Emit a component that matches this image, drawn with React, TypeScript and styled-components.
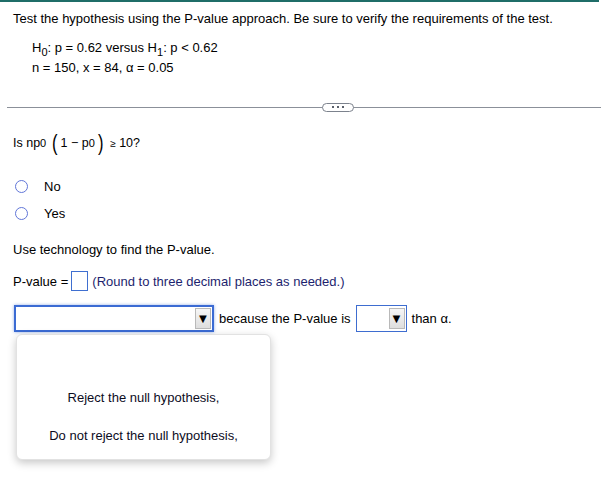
import React from "react";
import styled, { createGlobalStyle } from "styled-components";

const GlobalStyle = createGlobalStyle`
  html, body {
    margin: 0;
    padding: 0;
    background: #ffffff;
  }
  body {
    font-family: "Liberation Sans", Arial, sans-serif;
    color: #000000;
  }
`;

export default function App() {
  return (
    <Page>
      <GlobalStyle />
      <TopBar />
      <Prompt>Test the hypothesis using the P-value approach. Be sure to verify the requirements of the test.</Prompt>

      <MathBlock>
        <MathLine>
          H<Sub>0</Sub>: p = 0.62 versus H<Sub>1</Sub>: p &lt; 0.62
        </MathLine>
        <MathLine>n = 150, x = 84, α = 0.05</MathLine>
      </MathBlock>

      <Divider>
        <MoreButton type="button">
          <Dot />
          <Dot />
          <Dot />
        </MoreButton>
      </Divider>

      <Question>
        Is np<Sub>0</Sub>
        <BigParen $left>(</BigParen>1 − p<Sub>0</Sub>
        <BigParen>)</BigParen>
        <Geq>≥</Geq> 10?
      </Question>

      <RadioList>
        <RadioRow>
          <RadioCircle />
          <RadioLabel>No</RadioLabel>
        </RadioRow>
        <RadioRow>
          <RadioCircle />
          <RadioLabel>Yes</RadioLabel>
        </RadioRow>
      </RadioList>

      <Instruction>Use technology to find the P-value.</Instruction>

      <AnswerRow>
        P-value =<AnswerBox />
        <Hint>(Round to three decimal places as needed.)</Hint>
      </AnswerRow>

      <SelectRow>
        <SelectWrap>
          <FakeSelect $width={200} $focused>
            <ArrowButton>▼</ArrowButton>
          </FakeSelect>
          <Menu>
            <MenuItem />
            <MenuItem>Reject the null hypothesis,</MenuItem>
            <MenuItem>Do not reject the null hypothesis,</MenuItem>
          </Menu>
        </SelectWrap>
        <RowText>because the P-value is</RowText>
        <FakeSelect $width={51}>
          <ArrowButton>▼</ArrowButton>
        </FakeSelect>
        <RowText>than α.</RowText>
      </SelectRow>
    </Page>
  );
}

const Page = styled.div`
  width: 601px;
  height: 497px;
  overflow: hidden;
`;

const TopBar = styled.div`
  height: 2px;
  width: 599px;
  background-color: #1f6d68;
`;

const Prompt = styled.p`
  margin: 9px 0 0 13px;
  font-size: 13px;
  line-height: 16px;
`;

const MathBlock = styled.div`
  margin: 11px 0 0 32px;
`;

const MathLine = styled.div`
  font-size: 13px;
  line-height: 20px;
`;

const Sub = styled.sub`
  font-size: 11px;
  vertical-align: -4px;
  line-height: 0;
`;

const Divider = styled.div`
  margin: 24px 0 0 7px;
  height: 10px;
  display: flex;
  align-items: center;
  justify-content: center;
  position: relative;

  &::before {
    content: "";
    position: absolute;
    left: 0;
    right: 0;
    top: 5px;
    height: 1px;
    background-color: #8b9099;
  }
`;

const MoreButton = styled.button`
  position: relative;
  z-index: 1;
  width: 32px;
  height: 9px;
  margin-left: 68px;
  padding: 0;
  border: 1px solid #7c828d;
  border-radius: 5px;
  background-color: #ffffff;
  display: flex;
  align-items: center;
  justify-content: center;
  gap: 3px;
`;

const Dot = styled.span`
  width: 2px;
  height: 2px;
  background-color: #5a606b;
`;

const Question = styled.div`
  margin: 19px 0 0 13px;
  height: 24px;
  font-size: 12.5px;
  display: flex;
  align-items: center;
  white-space: pre;
`;

const BigParen = styled.span<{ $left?: boolean }>`
  font-size: 22px;
  line-height: 1;
  margin: ${(p) => (p.$left ? "0 2px 0 5px" : "0 2px")};
  transform: scaleX(0.75);
`;

const Geq = styled.span`
  font-size: 10px;
  margin-left: 4px;
`;

const RadioList = styled.div`
  margin: 18px 0 0 15px;
  display: flex;
  flex-direction: column;
`;

const RadioRow = styled.label`
  height: 27px;
  display: flex;
  align-items: center;
`;

const RadioCircle = styled.span`
  width: 11px;
  height: 11px;
  border: 1.2px solid #6176d8;
  border-radius: 50%;
  box-sizing: content-box;
`;

const RadioLabel = styled.span`
  margin-left: 16px;
  font-size: 13px;
`;

const Instruction = styled.p`
  margin: 15px 0 0 13px;
  font-size: 13px;
  line-height: 16px;
`;

const AnswerRow = styled.div`
  margin: 13px 0 0 13px;
  height: 20px;
  font-size: 13px;
  display: flex;
  align-items: center;
`;

const AnswerBox = styled.span`
  width: 15px;
  height: 18px;
  margin-left: 3px;
  border: 1px solid #3f6fd0;
`;

const Hint = styled.span`
  margin-left: 4px;
  color: #1d1f6e;
`;

const SelectRow = styled.div`
  margin: 14px 0 0 14px;
  display: flex;
  align-items: center;
  gap: 5px;
  font-size: 13px;
`;

const SelectWrap = styled.div`
  position: relative;
`;

const FakeSelect = styled.div<{ $width: number; $focused?: boolean }>`
  width: ${(p) => p.$width}px;
  height: 27px;
  box-sizing: border-box;
  border: ${(p) => (p.$focused ? "2px solid #3b6bd3" : "1px solid #3e6dd0")};
  box-shadow: ${(p) => (p.$focused ? "0 0 3px rgba(59, 107, 211, 0.55)" : "none")};
  background-color: #ffffff;
  display: flex;
  align-items: center;
  justify-content: flex-end;
  padding-right: 1px;
`;

const ArrowButton = styled.span`
  width: 14px;
  height: 19px;
  border: 1px solid #b9b9b9;
  background: linear-gradient(#f6f6f6, #dedede);
  font-size: 13px;
  line-height: 19px;
  text-align: center;
  color: #000000;
`;

const RowText = styled.span`
  white-space: nowrap;
`;

const Menu = styled.div`
  position: absolute;
  top: 29px;
  left: 2px;
  width: 255px;
  height: 126px;
  box-sizing: border-box;
  padding: 7px 0 5px;
  border: 1px solid #e2e2e2;
  border-radius: 6px;
  background-color: #ffffff;
  box-shadow: 0 3px 8px rgba(0, 0, 0, 0.22);
  display: flex;
  flex-direction: column;
`;

const MenuItem = styled.div`
  height: 38px;
  display: flex;
  align-items: center;
  justify-content: center;
  font-size: 13px;
  color: #0c0c1e;
`;
